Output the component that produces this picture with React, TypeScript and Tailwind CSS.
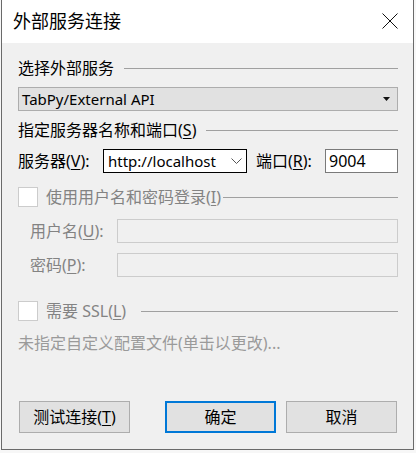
import React from 'react';

const font = { fontFamily: '"Noto Sans", "Noto Sans CJK SC", sans-serif' };

// Access-key letter, drawn underlined like a Win32 label
const Key: React.FC<{ k: string }> = ({ k }) => (
    <>(<span className="underline underline-offset-2">{k}</span>)</>
);

const GroupRule: React.FC<{ className?: string }> = ({ className }) => (
    <div className={`flex-1 h-px bg-[#a0a0a0] ${className ?? ''}`} />
);

const CheckBox: React.FC = () => (
    <div className="w-[20px] h-[20px] bg-white border border-[#cccccc] shrink-0" />
);

const Button: React.FC<{ children: React.ReactNode; primary?: boolean; className?: string }> = ({ children, primary, className }) => (
    <button
        className={`w-[111px] h-[32px] bg-[#e1e1e1] text-[16px] text-black flex items-center justify-center ${
            primary ? 'border-2 border-[#0078d7]' : 'border border-[#adadad]'
        } ${className ?? ''}`}
    >
        {children}
    </button>
);

const App: React.FC = () => {
    return (
        <div className="w-[416px] h-[453px] bg-[#f7f7f7] pl-px overflow-hidden" style={font}>
            <div className="w-[413px] h-[450px] border-x border-b border-[#6a6a6a] flex flex-col">
                {/* title bar */}
                <div className="h-[43px] bg-white flex items-center justify-between pl-[11px] pr-[15px] shrink-0">
                    <span className="text-[18px] text-black leading-none pb-[2px]">外部服务连接</span>
                    <svg width="16" height="16" viewBox="0 0 16 16" className="mt-[-2px]">
                        <path d="M0.5 0.5 L15.5 15.5 M15.5 0.5 L0.5 15.5" stroke="#111" strokeWidth="1" fill="none" />
                    </svg>
                </div>

                {/* dialog body */}
                <div className="flex-1 bg-[#f0f0f0] pl-[16px] pr-[15px] pb-[16px] flex flex-col text-[16px] text-black">
                    <div className="mt-[15px] h-[20px] flex items-center leading-none">
                        <span>选择外部服务</span>
                        <GroupRule className="ml-[10px]" />
                    </div>

                    <div className="mt-[9px] h-[24px] bg-[#e1e1e1] border border-[#adadad] flex items-center pl-[3px] pr-[7px] leading-none">
                        <span className="flex-1 text-[15px]">TabPy/External API</span>
                        <svg width="7" height="4" viewBox="0 0 7 4">
                            <path d="M0 0 H7 L3.5 4 Z" fill="#111" />
                        </svg>
                    </div>

                    <div className="mt-[9px] h-[20px] flex items-center leading-none">
                        <span>指定服务器名称和端口<Key k="S" /></span>
                        <GroupRule className="ml-[10px]" />
                    </div>

                    <div className="mt-[9px] h-[24px] flex items-center leading-none">
                        <span className="w-[85px] shrink-0">服务器<Key k="V" />:</span>
                        <div className="w-[144px] h-full bg-white border border-black flex items-center pl-[4px] pr-[4px] shrink-0">
                            <span className="flex-1 text-[15px]">http://localhost</span>
                            <svg width="11" height="6" viewBox="0 0 11 6">
                                <path d="M0.5 0.5 L5.5 5.5 L10.5 0.5" stroke="#555" strokeWidth="1" fill="none" />
                            </svg>
                        </div>
                        <span className="ml-[9px] w-[69px] shrink-0">端口<Key k="R" />:</span>
                        <div className="flex-1 h-full bg-white border border-[#7a7a7a] flex items-center pl-[3px]">9004</div>
                    </div>

                    <div className="mt-[14px] h-[20px] flex items-center leading-none text-[#838383]">
                        <CheckBox />
                        <span className="ml-[8px]">使用用户名和密码登录<Key k="I" /></span>
                        <GroupRule className="ml-[2px]" />
                    </div>

                    <div className="mt-[12px] h-[24px] flex items-center leading-none text-[#838383] pl-[12px]">
                        <span className="w-[87px] shrink-0">用户名<Key k="U" />:</span>
                        <div className="flex-1 h-full border border-[#cccccc] bg-[#f0f0f0]" />
                    </div>

                    <div className="mt-[10px] h-[24px] flex items-center leading-none text-[#838383] pl-[12px]">
                        <span className="w-[87px] shrink-0">密码<Key k="P" />:</span>
                        <div className="flex-1 h-full border border-[#cccccc] bg-[#f0f0f0]" />
                    </div>

                    <div className="mt-[24px] h-[20px] flex items-center leading-none text-[#838383]">
                        <CheckBox />
                        <span className="ml-[8px]">需要 SSL<Key k="L" /></span>
                        <GroupRule className="ml-[15px]" />
                    </div>

                    <div className="mt-[12px] h-[20px] flex items-center leading-none text-[#9a9a9a]">
                        未指定自定义配置文件(单击以更改)...
                    </div>

                    <div className="mt-auto flex items-center">
                        <Button className="ml-px">测试连接<Key k="T" /></Button>
                        <Button primary className="ml-[35px]">确定</Button>
                        <Button className="ml-[10px]">取消</Button>
                    </div>
                </div>
            </div>
        </div>
    );
};

export default App;
